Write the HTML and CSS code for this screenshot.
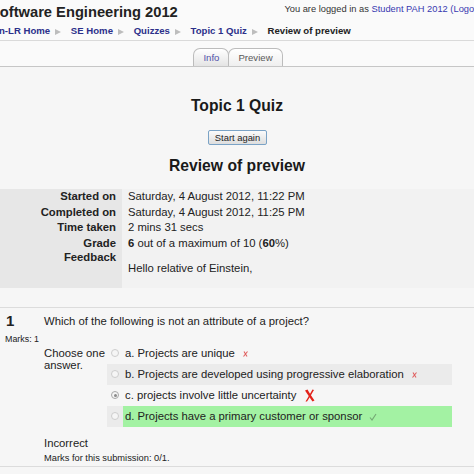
FILE: index.html
```html
<!DOCTYPE html>
<html lang="en">
<head>
    <meta charset="UTF-8">
    <meta name="viewport" content="width=device-width, initial-scale=1.0">
    <title>SE2012: Topic 1 Quiz</title>
    <link rel="stylesheet" href="styles.css">
</head>
<body>
    <div id="header">
        <h1 class="headermain">Software Engineering 2012</h1>
        <div class="logininfo">You are logged in as <a href="#">Student PAH 2012</a> <a href="#">(Logout)</a></div>
    </div>

    <div class="navbar">
        <a href="#">n-LR Home</a><span class="sep"></span>
        <a href="#">SE Home</a><span class="sep"></span>
        <a href="#">Quizzes</a><span class="sep"></span>
        <a href="#">Topic 1 Quiz</a><span class="sep"></span>
        <span class="current">Review of preview</span>
    </div>

    <div class="tabrow">
        <a href="#" class="tab">Info</a><a href="#" class="tab here">Preview</a>
    </div>

    <div id="content">
        <h2 class="main">Topic 1 Quiz</h2>
        <div class="buttons"><button>Start again</button></div>
        <h2 class="main review">Review of preview</h2>

        <table class="summary">
            <tr><th>Started on</th><td>Saturday, 4 August 2012, 11:22 PM</td></tr>
            <tr><th>Completed on</th><td>Saturday, 4 August 2012, 11:25 PM</td></tr>
            <tr><th>Time taken</th><td>2 mins 31 secs</td></tr>
            <tr><th>Grade</th><td><b>6</b> out of a maximum of 10 (<b>60</b>%)</td></tr>
            <tr class="feedback"><th>Feedback</th><td><p>Hello relative of Einstein,</p></td></tr>
        </table>

        <div class="que">
            <div class="info">
                <div class="no">1</div>
                <div class="grade">Marks: 1</div>
            </div>
            <div class="qtext-wrap">
                <div class="qtext">Which of the following is not an attribute of a project?</div>
                <div class="ablock">
                    <div class="prompt">Choose one answer.</div>
                    <div class="answer">
                        <div class="r0">
                            <span class="rcell"><span class="radio"></span></span>
                            <span class="label">a. Projects are unique
                                <svg class="mark" width="7" height="8" viewBox="0 0 7 8"><path d="M2 1.5 L5 6.5 M5.5 1.5 L1.5 6.5" stroke="#e06060" stroke-width="1.1" fill="none"/></svg>
                            </span>
                        </div>
                        <div class="r1">
                            <span class="rcell"><span class="radio"></span></span>
                            <span class="label">b. Projects are developed using progressive elaboration
                                <svg class="mark" width="7" height="8" viewBox="0 0 7 8"><path d="M2 1.5 L5 6.5 M5.5 1.5 L1.5 6.5" stroke="#e06060" stroke-width="1.1" fill="none"/></svg>
                            </span>
                        </div>
                        <div class="r0">
                            <span class="rcell"><span class="radio checked"></span></span>
                            <span class="label">c. projects involve little uncertainty
                                <svg class="mark big" width="11" height="13" viewBox="0 0 11 13">
                                    <path d="M1 1.5 C3 4.5 6 9 8.5 12.5 L10.5 11.5 C8 8 5.5 4 3.5 0.5 Z" fill="#e3231b"/>
                                    <path d="M8.5 0.5 C6.5 4 4 8.5 1.5 12.5 L3 12.5 C5.5 9 7.5 5 10 1 Z" fill="#e3231b"/>
                                </svg>
                            </span>
                        </div>
                        <div class="r1">
                            <span class="rcell"><span class="radio"></span></span>
                            <span class="label correct">d. Projects have a primary customer or sponsor
                                <svg class="mark" width="8" height="8" viewBox="0 0 8 8"><path d="M1 4.5 L3 7 L7 1" stroke="#74a874" stroke-width="1.1" fill="none"/></svg>
                            </span>
                        </div>
                    </div>
                </div>
                <div class="correctness">Incorrect</div>
                <div class="gradingdetails">Marks for this submission: 0/1.</div>
            </div>
        </div>
    </div>
</body>
</html>
```

FILE: styles.css
```css
body {
    margin: 0;
    padding: 0;
    font-family: "Liberation Sans", Arial, sans-serif;
    font-size: 11.3px;
    color: #222;
    background-color: #f6f6f6;
    overflow: hidden;
}
a {
    text-decoration: none;
}

/* header */
#header {
    display: flex;
    justify-content: space-between;
    align-items: flex-start;
    height: 22px;
    margin: 0 -11px 0 -10px;
    background-color: #fafafa;
}
.headermain {
    margin: 4px 0 0;
    font-size: 14.7px;
    line-height: 17px;
    color: #222;
}
.logininfo {
    margin-top: 4px;
    font-size: 9.3px;
    line-height: 11px;
    color: #333;
    white-space: nowrap;
}
.logininfo a {
    color: #3838b0;
}

/* breadcrumb */
.navbar {
    height: 18px;
    line-height: 18px;
    padding-left: 0;
    margin-left: -1px;
    font-size: 9.6px;
    font-weight: bold;
    white-space: nowrap;
    border-bottom: 1px solid #dadada;
    background-color: #fafafa;
}
.navbar a {
    color: #2c308a;
}
.navbar .current {
    color: #222;
}
.navbar .sep {
    display: inline-block;
    width: 0;
    height: 0;
    margin: 0 7px 0 5px;
    border-left: 6px solid #bdbdbd;
    border-top: 3.5px solid transparent;
    border-bottom: 3.5px solid transparent;
    vertical-align: -0.5px;
}

/* tabs */
.tabrow {
    display: flex;
    justify-content: center;
    padding-top: 7px;
    padding-left: 2px;
    border-bottom: 1px solid #c6c6c6;
    background-color: #fafafa;
}
.tab {
    height: 17px;
    line-height: 18px;
    padding: 0 9px;
    font-size: 9.6px;
    color: #5252aa;
    border: 1px solid #bcbcbc;
    border-bottom: none;
    border-radius: 7px 7px 0 0;
    background: linear-gradient(#ffffff, #e4e4e4);
}
.tab + .tab {
    margin-left: -1px;
}
.tab.here {
    color: #5a5a5a;
    background: linear-gradient(#ffffff, #efefef);
}

/* quiz heading */
#content {
    padding-top: 30px;
}
h2.main {
    margin: 0;
    text-align: center;
    font-size: 15.7px;
    line-height: 18px;
    color: #1a1a1a;
}
h2.review {
    margin: 12px 0 14px;
}
.buttons {
    display: flex;
    justify-content: center;
    margin-top: 15px;
    padding-left: 1px;
}
.buttons button {
    height: 15px;
    padding: 0 6px;
    font-family: "Liberation Sans", Arial, sans-serif;
    font-size: 9.4px;
    line-height: 13px;
    color: #222;
    border: 1px solid #7ba3c6;
    border-radius: 2px;
    background: linear-gradient(#fbfbfb, #dedede);
}

/* attempt summary */
table.summary {
    width: 100%;
    border-spacing: 0;
    border-collapse: collapse;
}
.summary th,
.summary td {
    padding: 0;
    line-height: 15.7px;
    vertical-align: top;
}
.summary th {
    width: 116px;
    padding-right: 6px;
    text-align: right;
    background-color: #e7e7e7;
}
.summary td {
    padding-left: 6px;
    text-align: left;
    background-color: #f2f2f2;
}
.summary .feedback th {
    line-height: 10px;
}
.summary td p {
    margin: 9px 0 11px;
}

/* question */
.que {
    display: flex;
    margin-top: 19px;
    padding-top: 5px;
    padding-bottom: 2px;
    border-top: 1px solid #dcdcdc;
    border-bottom: 1px solid #dcdcdc;
}
.que .info {
    width: 39px;
    padding-left: 5px;
}
.que .no {
    font-size: 15px;
    font-weight: bold;
    line-height: 16px;
    padding-left: 1px;
}
.que .grade {
    margin-top: 4px;
    font-size: 8.9px;
    line-height: 12px;
}
.qtext-wrap {
    flex: 1;
}
.qtext {
    line-height: 16px;
}
.ablock {
    display: flex;
    margin-top: 14px;
}
.prompt {
    width: 63px;
    padding-top: 4px;
    line-height: 12px;
}
.answer {
    width: 345px;
}
.answer > div {
    display: flex;
    height: 21px;
    line-height: 21px;
}
.answer .r1 {
    background-color: #ebebeb;
}
.rcell {
    display: flex;
    align-items: center;
    justify-content: center;
    width: 16px;
}
.radio {
    display: block;
    width: 6px;
    height: 6px;
    border: 1px solid #cdcdcd;
    border-radius: 50%;
    background-color: #f5f5f5;
    position: relative;
}
.radio.checked {
    border-color: #a8a8a8;
}
.radio.checked::after {
    content: "";
    position: absolute;
    left: 1.5px;
    top: 1.5px;
    width: 3px;
    height: 3px;
    border-radius: 50%;
    background-color: #8a8a8a;
}
.label {
    flex: 1;
    padding-left: 2px;
    white-space: nowrap;
}
.label.correct {
    background-color: #a3f2a3;
}
.mark {
    margin-left: 4px;
    vertical-align: -1px;
}
.mark.big {
    vertical-align: -3px;
}
.correctness {
    margin-top: 10px;
    line-height: 13px;
}
.gradingdetails {
    margin-top: 3px;
    font-size: 9.3px;
    line-height: 11px;
}
```
